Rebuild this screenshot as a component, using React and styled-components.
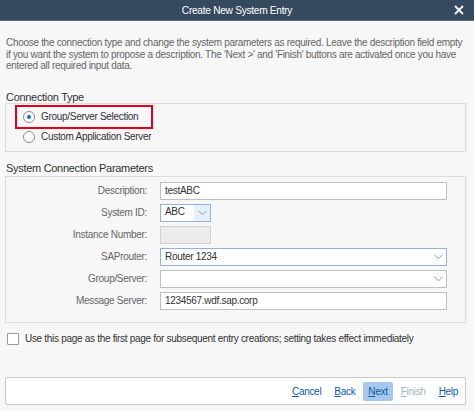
import React from 'react';
import styled, { createGlobalStyle } from 'styled-components';

const GlobalStyle = createGlobalStyle`
  html, body {
    margin: 0;
    padding: 0;
    background: #f7f7f7;
  }
  body {
    font-family: "Liberation Sans", Arial, sans-serif;
    font-size: 10px;
    letter-spacing: -0.3px;
  }
`;

const Window = styled.div`
  width: 474px;
  height: 411px;
  display: flex;
  flex-direction: column;
  background: #f7f7f7;
  overflow: hidden;
`;

const TitleBar = styled.div`
  height: 20px;
  flex: none;
  background: #354a5f;
  border-bottom: 1px solid #5b6d7f;
  color: #fff;
  font-size: 10.2px;
  display: flex;
  align-items: center;
  justify-content: center;
  position: relative;
`;

const CloseBtn = styled.span`
  position: absolute;
  right: 9px;
  top: 4px;
  width: 12px;
  height: 12px;
  display: flex;
  align-items: center;
  justify-content: center;
`;

const Body = styled.div`
  flex: 1;
  display: flex;
  flex-direction: column;
  padding: 16px 8px 0 5px;
`;

const Intro = styled.p`
  margin: 0 0 0 1px;
  line-height: 11.5px;
  color: #666;
`;

const SectionTitle = styled.div`
  font-size: 11px;
  line-height: 12px;
  color: #333;
  margin: ${p => p.$top}px 0 ${p => p.$bottom}px 1px;
`;

const Group = styled.div`
  border: 1px solid #dcdcdc;
  box-shadow: 1px 0 0 #eaeaea;
  background: #f7f7f7;
  height: ${p => p.$h}px;
  box-sizing: border-box;
`;

const RadioList = styled.div`
  display: flex;
  flex-direction: column;
  padding: 3px 0 0 11px;
`;

const RadioRow = styled.label`
  display: flex;
  align-items: center;
  gap: 6px;
  height: 20px;
  padding: 0 13px 0 6px;
  width: fit-content;
  color: #333;
  outline: ${p => (p.$marked ? '2px solid #e2001a' : 'none')};
`;

const RadioDot = styled.span`
  width: 10px;
  height: 10px;
  border-radius: 50%;
  border: 1px solid #8c8c8c;
  background: #fff;
  display: flex;
  align-items: center;
  justify-content: center;
  &::after {
    content: '';
    width: 4px;
    height: 4px;
    border-radius: 50%;
    background: ${p => (p.$on ? '#0a6ed1' : 'transparent')};
  }
`;

const Form = styled.div`
  display: grid;
  grid-template-columns: 141px 1fr;
  column-gap: 13px;
  row-gap: 4px;
  padding: 5px 18px 0 0;
  align-items: center;
`;

const Label = styled.div`
  color: #666;
  text-align: right;
`;

const Field = styled.div`
  box-sizing: border-box;
  height: 18px;
  width: ${p => p.$w || '100%'};
  border: 1px solid ${p => (p.$disabled ? '#d0d0d0' : p.$focus ? '#8db4dc' : '#bfbfbf')};
  background: ${p => (p.$disabled ? '#ececec' : '#fff')};
  display: flex;
  align-items: center;
  color: #333;
  padding-left: 4px;
`;

const FieldText = styled.span`
  flex: 1;
  margin-top: ${p => (p.$raised ? '-3px' : '0')};
`;

const Arrow = styled.span`
  width: 16px;
  align-self: stretch;
  display: flex;
  align-items: center;
  justify-content: center;
  background: ${p => (p.$tint ? '#e6f0fa' : 'transparent')};
`;

const CheckRow = styled.label`
  display: flex;
  align-items: center;
  gap: 6px;
  margin: 10px 0 0 2px;
  color: #333;
`;

const Box = styled.span`
  width: 10px;
  height: 10px;
  border: 1px solid #9a9a9a;
  background: #fff;
  border-radius: 1px;
`;

const Footer = styled.div`
  margin-top: auto;
  margin-bottom: 6px;
  height: 28px;
  box-sizing: border-box;
  border: 1px solid #c9c9c9;
  border-radius: 2px;
  background: #fff;
  display: flex;
  align-items: center;
  justify-content: flex-end;
  padding-right: 2px;
  gap: 3px;
`;

const Btn = styled.span`
  padding: 4px 5px;
  border-radius: 2px;
  color: ${p => (p.$off ? '#9fb5cc' : '#0a5ba8')};
  background: ${p => (p.$primary ? '#a6c8ea' : 'transparent')};
`;

const Chevron = () => (
  <svg width="9" height="6" viewBox="0 0 9 6">
    <path d="M0.5 0.8 L4.5 4.8 L8.5 0.8" fill="none" stroke="#8a9aab" strokeWidth="1" />
  </svg>
);

const rows = [
  { label: 'Description:', value: 'testABC' },
  { label: 'System ID:', value: 'ABC', w: '51px', focus: true, drop: true, tint: true },
  { label: 'Instance Number:', value: '', w: '51px', disabled: true },
  { label: 'SAProuter:', value: 'Router 1234', focus: true, drop: true },
  { label: 'Group/Server:', value: '', drop: true },
  { label: 'Message Server:', value: '1234567.wdf.sap.corp' },
];

export default function App() {
  return (
    <Window>
      <GlobalStyle />
      <TitleBar>
        Create New System Entry
        <CloseBtn>
          <svg width="10" height="10" viewBox="0 0 10 10">
            <path d="M1 1 L9 9 M9 1 L1 9" stroke="#fff" strokeWidth="1.8" />
          </svg>
        </CloseBtn>
      </TitleBar>
      <Body>
        <Intro>
          Choose the connection type and change the system parameters as required. Leave the description field empty
          if you want the system to propose a description. The 'Next &gt;' and 'Finish' buttons are activated once you have
          entered all required input data.
        </Intro>

        <SectionTitle $top={19} $bottom={0}>Connection Type</SectionTitle>
        <Group $h={49}>
          <RadioList>
            <RadioRow $marked>
              <RadioDot $on />
              Group/Server Selection
            </RadioRow>
            <RadioRow>
              <RadioDot />
              Custom Application Server
            </RadioRow>
          </RadioList>
        </Group>

        <SectionTitle $top={10} $bottom={2}>System Connection Parameters</SectionTitle>
        <Group $h={147}>
          <Form>
            {rows.map(r => (
              <React.Fragment key={r.label}>
                <Label>{r.label}</Label>
                <Field $w={r.w} $focus={r.focus} $disabled={r.disabled}>
                  <FieldText $raised={r.tint}>{r.value}</FieldText>
                  {r.drop && (
                    <Arrow $tint={r.tint}>
                      <Chevron />
                    </Arrow>
                  )}
                </Field>
              </React.Fragment>
            ))}
          </Form>
        </Group>

        <CheckRow>
          <Box />
          Use this page as the first page for subsequent entry creations; setting takes effect immediately
        </CheckRow>

        <Footer>
          <Btn><u>C</u>ancel</Btn>
          <Btn><u>B</u>ack</Btn>
          <Btn $primary><u>N</u>ext</Btn>
          <Btn $off><u>F</u>inish</Btn>
          <Btn><u>H</u>elp</Btn>
        </Footer>
      </Body>
    </Window>
  );
}
